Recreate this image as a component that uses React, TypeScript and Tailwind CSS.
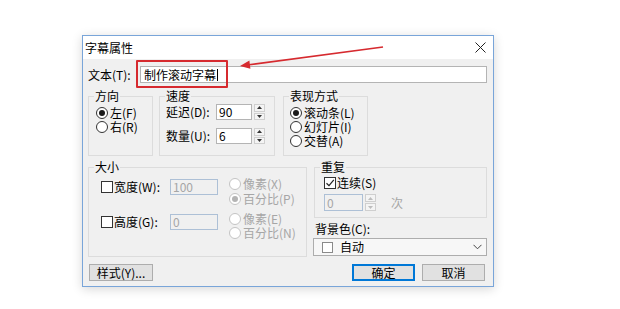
import React from 'react';

const font = "font-['Noto_Sans_CJK_SC','Noto_Sans',sans-serif]";

function Radio({ checked, disabled, label }: { checked?: boolean; disabled?: boolean; label: string }) {
  return (
    <div className="flex h-[14px] items-center">
      <span
        className={`flex h-[12px] w-[12px] shrink-0 items-center justify-center rounded-full border bg-white ${
          disabled ? 'border-[#c4c4c4]' : 'border-[#333333]'
        }`}
      >
        {checked && (
          <span className={`h-[6px] w-[6px] rounded-full ${disabled ? 'bg-[#b4b4b4]' : 'bg-[#1a1a1a]'}`} />
        )}
      </span>
      <span className={`ml-[2px] leading-[14px] ${disabled ? 'text-[#a6a6a6]' : 'text-black'}`}>{label}</span>
    </div>
  );
}

function Check({ checked }: { checked?: boolean }) {
  return (
    <span className="flex h-[12px] w-[12px] shrink-0 items-center justify-center border border-[#333333] bg-white">
      {checked && (
        <svg width="10" height="10" viewBox="0 0 10 10">
          <path d="M1.5 5.2L4 7.6L8.8 1.8" fill="none" stroke="#222" strokeWidth="1.2" />
        </svg>
      )}
    </span>
  );
}

function Spin({ disabled }: { disabled?: boolean }) {
  const c = disabled ? '#bdbdbd' : '#333333';
  return (
    <div className="flex h-full w-[11px] flex-col gap-[1px]">
      <div className="flex flex-1 items-center justify-center border border-[#cfcfcf] bg-[#f4f4f4]">
        <svg width="5" height="3" viewBox="0 0 5 3">
          <path d="M0 3L2.5 0L5 3Z" fill={c} />
        </svg>
      </div>
      <div className="flex flex-1 items-center justify-center border border-[#cfcfcf] bg-[#f4f4f4]">
        <svg width="5" height="3" viewBox="0 0 5 3">
          <path d="M0 0L2.5 3L5 0Z" fill={c} />
        </svg>
      </div>
    </div>
  );
}

function Group({ title, className, children }: { title: string; className: string; children?: React.ReactNode }) {
  return (
    <div className={`relative border border-[#dcdcdc] ${className}`}>
      <span className="absolute left-[5px] top-[-8px] bg-[#f0f0f0] px-[1px] leading-[14px]">{title}</span>
      {children}
    </div>
  );
}

function Btn({ label, primary, className }: { label: string; primary?: boolean; className: string }) {
  return (
    <div
      className={`flex h-[17px] items-center justify-center bg-[#e1e1e1] leading-[14px] ${
        primary ? 'border-2 border-[#0078d7]' : 'border border-[#adadad]'
      } ${className}`}
    >
      {label}
    </div>
  );
}

export default function App() {
  return (
    <div className={`relative h-[309px] w-[620px] overflow-hidden bg-white pl-[82px] pt-[35px] text-[12px] text-black ${font}`}>
      <div className="flex h-[252px] w-[412px] flex-col border border-[#79a5d9] bg-[#f0f0f0] shadow-[0_2px_10px_rgba(0,0,0,0.16)]">
        {/* title bar */}
        <div className="flex h-[23px] shrink-0 items-center justify-between bg-white pl-[2px] pr-[7px]">
          <span className="leading-[14px]">字幕属性</span>
          <svg width="11" height="11" viewBox="0 0 11 11">
            <path d="M0.5 0.5L10.5 10.5M10.5 0.5L0.5 10.5" stroke="#222" strokeWidth="1" />
          </svg>
        </div>

        <div className="flex flex-1 flex-col pl-[5px] pr-[6px]">
          {/* text row */}
          <div className="mt-[7px] flex h-[17px] items-center">
            <span className="w-[52px] leading-[14px]">文本(T):</span>
            <div className="flex h-full flex-1 items-center border border-[#b4b4b4] bg-white pl-[3px]">
              <span className="leading-[14px]">制作滚动字幕</span>
              <span className="ml-[1px] h-[12px] w-[1px] bg-black" />
            </div>
          </div>

          {/* first groups row */}
          <div className="mt-[13px] flex h-[60px] shrink-0">
            <Group title="方向" className="w-[65px]">
              <div className="flex flex-col pl-[7px] pt-[9px]">
                <Radio checked label="左(F)" />
                <Radio label="右(R)" />
              </div>
            </Group>

            <Group title="速度" className="ml-[6px] w-[116px]">
              <div className="flex flex-col gap-[8px] pl-[6px] pt-[7px]">
                <div className="flex h-[16px] items-center">
                  <span className="w-[50px] leading-[14px]">延迟(D):</span>
                  <div className="flex h-full w-[36px] items-center border border-[#b4b4b4] bg-white pl-[2px] leading-[14px]">90</div>
                  <div className="ml-[2px] h-full">
                    <Spin />
                  </div>
                </div>
                <div className="flex h-[16px] items-center">
                  <span className="w-[50px] leading-[14px]">数量(U):</span>
                  <div className="flex h-full w-[36px] items-center border border-[#b4b4b4] bg-white pl-[2px] leading-[14px]">6</div>
                  <div className="ml-[2px] h-full">
                    <Spin />
                  </div>
                </div>
              </div>
            </Group>

            <Group title="表现方式" className="ml-[8px] w-[85px]">
              <div className="flex flex-col pl-[6px] pt-[9px]">
                <Radio checked label="滚动条(L)" />
                <Radio label="幻灯片(I)" />
                <Radio label="交替(A)" />
              </div>
            </Group>
          </div>

          {/* second row */}
          <div className="mt-[11px] flex h-[90px] shrink-0">
            <Group title="大小" className="w-[219px]">
              <div className="flex flex-col gap-[7px] pl-[12px] pt-[9px]">
                <div className="flex h-[28px] items-start">
                  <div className="mt-[2px] flex h-[16px] items-center">
                    <Check />
                    <span className="ml-[1px] w-[56px] leading-[14px]">宽度(W):</span>
                    <div className="flex h-full w-[48px] items-center border border-[#adc0d6] bg-[#f0f0f0] pl-[2px] leading-[14px] text-[#a6a6a6]">100</div>
                  </div>
                  <div className="ml-[11px] flex flex-col gap-[1px]">
                    <Radio disabled label="像素(X)" />
                    <Radio disabled checked label="百分比(P)" />
                  </div>
                </div>
                <div className="flex h-[28px] items-start">
                  <div className="mt-[2px] flex h-[16px] items-center">
                    <Check />
                    <span className="ml-[1px] w-[56px] leading-[14px]">高度(G):</span>
                    <div className="flex h-full w-[48px] items-center border border-[#adc0d6] bg-[#f0f0f0] pl-[2px] leading-[14px] text-[#a6a6a6]">0</div>
                  </div>
                  <div className="ml-[11px] flex flex-col">
                    <Radio disabled label="像素(E)" />
                    <Radio disabled label="百分比(N)" />
                  </div>
                </div>
              </div>
            </Group>

            <div className="ml-[6px] flex w-[174px] flex-col">
              <Group title="重复" className="ml-[1px] h-[51px] w-[173px]">
                <div className="flex flex-col pl-[9px] pt-[8px]">
                  <div className="flex h-[14px] items-center">
                    <Check checked />
                    <span className="ml-[1px] leading-[14px]">连续(S)</span>
                  </div>
                  <div className="mt-[4px] flex h-[17px] items-center">
                    <div className="flex h-full w-[39px] items-center border border-[#adc0d6] bg-[#f0f0f0] pl-[2px] leading-[14px] text-[#a6a6a6]">0</div>
                    <div className="ml-[2px] h-full">
                      <Spin disabled />
                    </div>
                    <span className="ml-[15px] leading-[14px] text-[#a6a6a6]">次</span>
                  </div>
                </div>
              </Group>
              <span className="mt-[4px] ml-[2px] h-[14px] leading-[14px]">背景色(C):</span>
              <div className="mt-[2px] flex h-[18px] items-center border border-[#adadad] bg-[#f7f7f7] pl-[8px] pr-[4px]">
                <span className="h-[11px] w-[11px] border border-[#8a8a8a] bg-white" />
                <span className="ml-[7px] leading-[14px]">自动</span>
                <svg className="ml-auto" width="9" height="6" viewBox="0 0 9 6">
                  <path d="M0.5 0.8L4.5 4.8L8.5 0.8" fill="none" stroke="#444" strokeWidth="1" />
                </svg>
              </div>
            </div>
          </div>

          {/* buttons */}
          <div className="mt-[7px] flex h-[17px] shrink-0">
            <Btn label="样式(Y)..." className="ml-[1px] w-[64px]" />
            <div className="flex-1" />
            <Btn label="确定" primary className="w-[63px]" />
            <Btn label="取消" className="ml-[7px] mr-[2px] w-[63px]" />
          </div>
        </div>
      </div>

      {/* annotation overlays */}
      <div className="absolute left-[136px] top-[60px] h-[28px] w-[92px] rounded-[1px] border-2 border-[#d62a2f]" />
      <svg className="absolute left-0 top-0" width="620" height="309" viewBox="0 0 620 309">
        <line x1="383" y1="47" x2="249" y2="64.8" stroke="#d62a2f" strokeWidth="1.6" />
        <polygon points="240,66 250.4,68.8 249.4,60.6" fill="#d62a2f" />
      </svg>
    </div>
  );
}
